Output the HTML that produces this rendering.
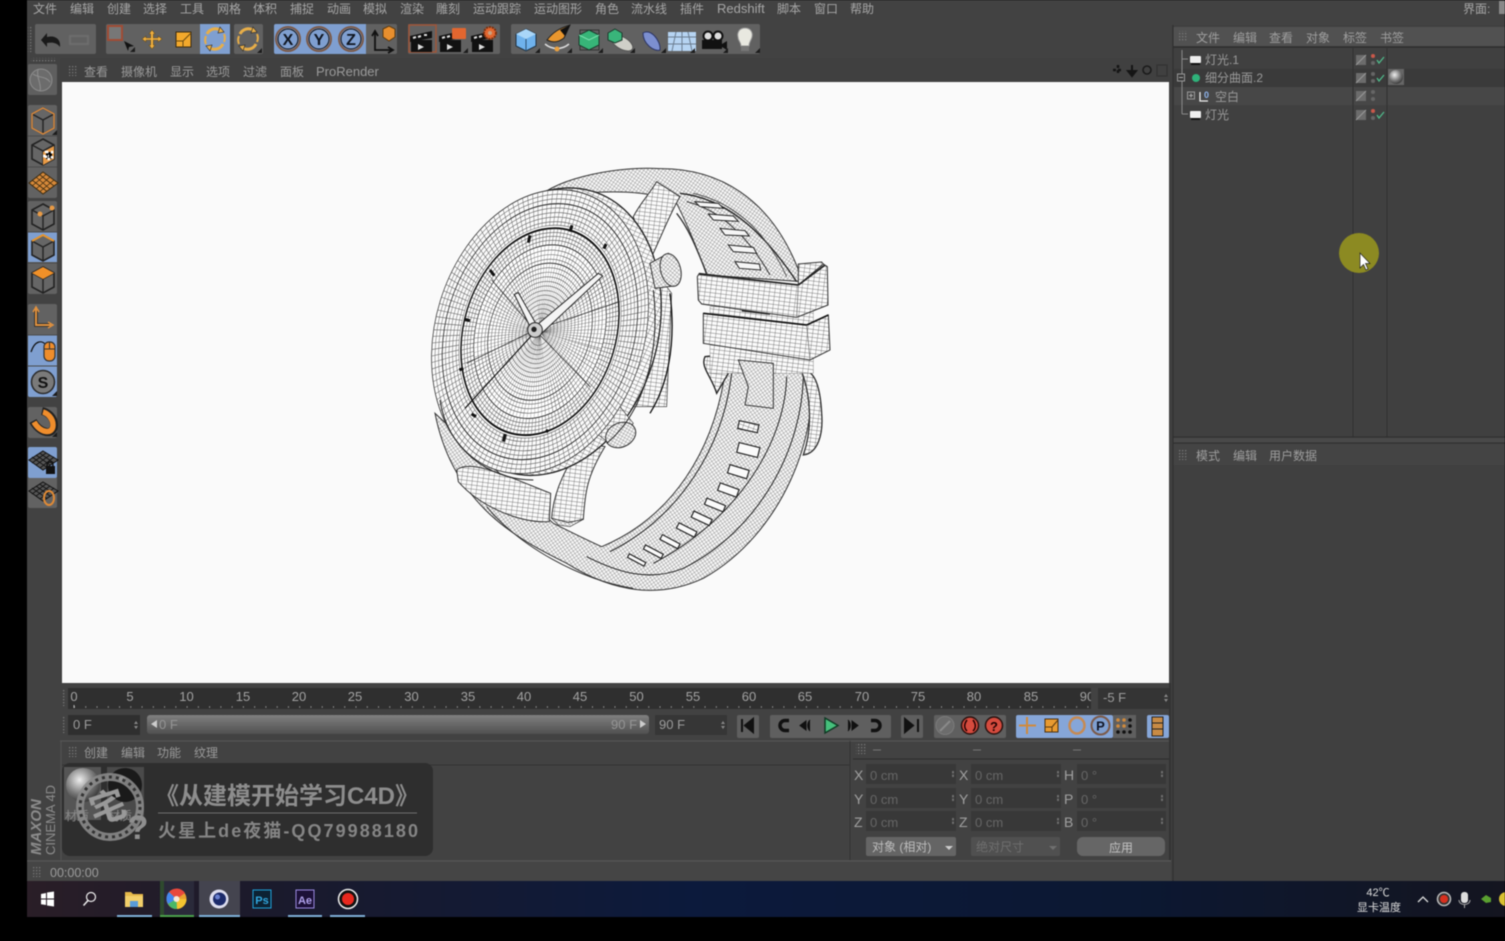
<!DOCTYPE html>
<html><head><meta charset="utf-8"><style>
html,body{margin:0;padding:0;background:#000;width:1505px;height:941px;overflow:hidden}
svg{display:block;filter:blur(.4px)}
text{font-family:"Liberation Sans","Noto Sans CJK SC",sans-serif}
.m{font-size:12px;fill:#a6a6a6}
.d{font-size:12px;fill:#9a9a9a}
.r{font-size:12px;fill:#a0a0a0}
.f{font-size:12px;fill:#8a8a8a}
.l{font-size:13px;fill:#9c9c9c}
.c{fill:none;stroke:#5a5a5a;stroke-width:1.900}
</style></head><body>
<svg width="1505" height="941" viewBox="0 0 1505 941" xmlns="http://www.w3.org/2000/svg">
<defs>
<pattern id="m" width="16" height="12" patternUnits="userSpaceOnUse" patternTransform="rotate(7)"><rect width="16" height="12" fill="#fbfbfb"/><path d="M0 0H16M0 0V12" stroke="#505050" stroke-width="2"/></pattern>
<pattern id="mf" width="9" height="9" patternUnits="userSpaceOnUse" patternTransform="rotate(-35)"><rect width="9" height="9" fill="#f8f8f8"/><path d="M0 0H9M0 0V9" stroke="#555" stroke-width="1.700"/></pattern>
<pattern id="mu" width="9" height="9" patternUnits="userSpaceOnUse" patternTransform="rotate(35)"><rect width="9" height="9" fill="#f8f8f8"/><path d="M0 0H9M0 0V9" stroke="#555" stroke-width="1.700"/></pattern>
<pattern id="grip" width="3" height="3" patternUnits="userSpaceOnUse"><rect width="1.300" height="1.300" fill="#777"/></pattern>
<linearGradient id="sl" x1="0" y1="0" x2="0" y2="1"><stop offset="0" stop-color="#808080"/><stop offset="1" stop-color="#505050"/></linearGradient>
<linearGradient id="tb" x1="0" y1="0" x2="1" y2="0"><stop offset="0" stop-color="#2a1e27"/><stop offset=".16" stop-color="#1b1a2c"/><stop offset=".45" stop-color="#0c1a3c"/><stop offset=".75" stop-color="#0c1832"/><stop offset="1" stop-color="#141520"/></linearGradient>
<radialGradient id="sph" cx=".4" cy=".35" r=".7"><stop offset="0" stop-color="#eee"/><stop offset=".6" stop-color="#777"/><stop offset="1" stop-color="#333"/></radialGradient>
<g id="cube"><path d="M0-13 11-7V7L0 13-11 7V-7Z" fill="#666" stroke="#222" stroke-width="1.600"/><path d="M-11-7 0-1 11-7M0-1V13" fill="none" stroke="#222" stroke-width="1.400"/></g>
<g id="clap"><rect x="-10" y="-1" width="21" height="12" fill="#111"/><path d="M-11-5 11-10V-3L-11 1Z" fill="#111"/><path d="M-8-3-5-4M-3-4 0-5M3-6 6-6" stroke="#ddd" stroke-width="2"/><path d="M-3 3 3 6-3 9Z" fill="#ddd"/></g>
<g id="tri"><path d="M0 0H-5L0-5Z" fill="#1c1c1c"/></g>
<g id="rot" fill="none"><path d="M-8-5A9.500 10 0 0 1 5-9M8 5A9.500 10 0 0 1-5 9" stroke="#e8ae48" stroke-width="3"/><path d="M-9 5A10 10 0 0 1-9-3M9-5A10 10 0 0 1 9 3" stroke="#e8ae48" stroke-width="2"/><path d="M5-12 9-7 3-6ZM-5 12-9 7-3 6Z" fill="#e8ae48" stroke="#222" stroke-width=".6"/></g>
</defs>

<rect width="1505" height="941" fill="#000"/>
<rect x="27" y="0" width="1478" height="881" fill="#424242"/>

<!-- menu -->
<text class="m" y="13"><tspan x="33">文件</tspan><tspan x="70">编辑</tspan><tspan x="107">创建</tspan><tspan x="143">选择</tspan><tspan x="180">工具</tspan><tspan x="217">网格</tspan><tspan x="253">体积</tspan><tspan x="290">捕捉</tspan><tspan x="327">动画</tspan><tspan x="363">模拟</tspan><tspan x="400">渲染</tspan><tspan x="436">雕刻</tspan><tspan x="473">运动跟踪</tspan><tspan x="534">运动图形</tspan><tspan x="595">角色</tspan><tspan x="631">流水线</tspan><tspan x="680">插件</tspan><tspan x="717" style="font-size:13px">Redshift</tspan><tspan x="777">脚本</tspan><tspan x="814">窗口</tspan><tspan x="850">帮助</tspan></text>

<!-- top toolbar -->
<rect x="28" y="26" width="4" height="26" fill="url(#grip)"/>
<rect x="35" y="24" width="61" height="30" rx="2" fill="#616161"/>
<path d="M41 40 47 33V37C55 35 61 39 60 47 57 43 53 42 47 43V47Z" fill="#1a1a1a"/>
<path d="M70 44V36H88V44Z" fill="none" stroke="#6d6d6d" stroke-width="2"/>
<rect x="106" y="24" width="124" height="30" rx="2" fill="#616161"/>
<rect x="200" y="24" width="30" height="30" fill="#7f9fd0"/>
<rect x="108" y="26" width="14" height="14" fill="#777" stroke="#a04c35" stroke-width="2"/>
<path d="M124 41 134 46 129 47 128 51Z" fill="#111"/>
<use href="#tri" x="135" y="52"/>
<path d="M152 30 155 34H153.300V38H158V36L162 39 158 42V40H153.300V45H155L152 49 149 45H150.700V40H146V42L142 39 146 36V38H150.700V34H149Z" fill="#f3b13e" stroke="#6a5020" stroke-width=".6"/>
<rect x="176" y="32" width="15" height="15" fill="#f3a92c" stroke="#3a2a10"/><path d="M176 41H183V47M183 41 191 33" stroke="#6a4a10" fill="none"/>
<use href="#rot" x="215" y="39"/>
<rect x="234" y="24" width="29" height="30" rx="2" fill="#616161"/>
<use href="#rot" x="248" y="39"/><use href="#tri" x="262" y="53"/>
<rect x="274" y="24" width="123" height="30" rx="2" fill="#616161"/>
<path d="M274 26a2 2 0 0 1 2-2H366V54H276a2 2 0 0 1-2-2Z" fill="#7f9fd0"/>
<g fill="#7f9fd0" stroke="#7c5a48" stroke-width="2"><circle cx="288" cy="39" r="12"/><circle cx="319" cy="39" r="12"/><circle cx="351" cy="39" r="12"/></g>
<g fill="none" stroke="#111" stroke-width="1"><circle cx="288" cy="39" r="10"/><circle cx="319" cy="39" r="10"/><circle cx="351" cy="39" r="10"/></g>
<text y="45" style="font-size:16px;font-weight:bold" fill="#0f1520" text-anchor="middle"><tspan x="288">X</tspan><tspan x="319">Y</tspan><tspan x="351">Z</tspan></text>
<path d="M375 32V50H392M372 36 375 31 378 36M388 47 393 50 388 53" fill="none" stroke="#111" stroke-width="1.800"/>
<path d="M383 29 389 26 395 29V37L389 41 383 37Z" fill="#e88f2e" stroke="#5c3a10"/>
<rect x="408" y="24" width="92" height="30" rx="2" fill="#616161"/>
<rect x="409" y="25" width="27" height="27" fill="none" stroke="#a05538" stroke-width="1.500"/>
<use href="#clap" x="421" y="41"/><use href="#clap" x="450" y="41"/><use href="#clap" x="482" y="41"/>
<rect x="452" y="28" width="14" height="11" rx="1" fill="#e2662f"/>
<circle cx="490" cy="33" r="6" fill="#e2662f" stroke="#7a3010" stroke-width="2" stroke-dasharray="2 1"/><circle cx="490" cy="33" r="2" fill="#c9a080"/>
<use href="#tri" x="468" y="53"/>
<rect x="511" y="24" width="249" height="30" rx="2" fill="#616161"/>
<path d="M526 29 536 34V46L526 51 516 46V34Z" fill="#6fb2ec" stroke="#1e3040"/><path d="M516 34 526 39 536 34 526 29Z" fill="#a9d6f8"/><path d="M526 39V51" stroke="#2d5070"/>
<path d="M547 40C553 32 560 28 570 25L564 38C559 42 553 43 547 40Z" fill="#e8962e" stroke="#222"/><path d="M560 30 570 25 565 36Z" fill="#111"/><path d="M545 44C552 50 562 50 569 44" fill="none" stroke="#ddd" stroke-width="1.500"/><circle cx="557" cy="49" r="2.500" fill="#e8a040"/>
<rect x="580" y="30" width="19" height="20" fill="none" stroke="#333"/><path d="M589 30 599 35V45L589 50 579 45V35Z" fill="#37b578" stroke="#1b3a2c"/><path d="M579 35 589 40 599 35" fill="none" stroke="#7ce0ae"/>
<ellipse cx="622" cy="43" rx="12" ry="6" transform="rotate(30 622 43)" fill="#cfcfc8" stroke="#555"/><path d="M615 29 622 33V40L615 43 608 40V33Z" fill="#39b47a" stroke="#1b3a2c"/>
<path d="M643 33C650 28 661 40 660 50 654 52 643 44 643 33Z" fill="#7c8fd0" stroke="#2b3464"/>
<path d="M668 32H696V51H668Z" fill="#b6d4f2"/><path d="M668 37H696M668 44H696M676 32 672 51M688 32 692 51M682 32V51" stroke="#6b7d90"/><use href="#tri" x="695" y="53"/>
<circle cx="708" cy="36" r="4.500" fill="#ddd" stroke="#111" stroke-width="2"/><circle cx="718" cy="36" r="4.500" fill="#ddd" stroke="#111" stroke-width="2"/><rect x="702" y="40" width="20" height="9" fill="#111"/><path d="M722 44 727 41V50L722 47Z" fill="#111"/>
<path d="M745 28C751 28 753 33 752 37 751 41 749 42 749 46H741C741 42 738 41 738 37 737 33 739 28 745 28Z" fill="#e8e8e0" stroke="#999"/><rect x="741" y="46" width="8" height="5" fill="#777"/>
<g><use href="#tri" x="540" y="53"/><use href="#tri" x="572" y="53"/><use href="#tri" x="603" y="53"/><use href="#tri" x="635" y="53"/><use href="#tri" x="666" y="53"/><use href="#tri" x="728" y="53"/><use href="#tri" x="760" y="53"/></g>

<!-- left toolbar -->
<rect x="31" y="58" width="24" height="4" fill="url(#grip)"/>
<rect x="28" y="64" width="29" height="31" rx="2" fill="#5f5f5f"/>
<circle cx="41" cy="80" r="11" fill="#6c6c6c" stroke="#8c8c8c"/><path d="M33 74C38 78 46 76 50 82M38 69C36 78 42 84 40 91" stroke="#8f8f8f" fill="none"/>
<rect x="28" y="105" width="29" height="93" rx="2" fill="#626262"/>
<rect x="28" y="201" width="29" height="93" rx="2" fill="#626262"/><rect x="28" y="232" width="29" height="30" fill="#7f9fd0"/>
<rect x="28" y="304" width="29" height="93" rx="2" fill="#626262"/><path d="M28 335H57V395a2 2 0 0 1-2 2H30a2 2 0 0 1-2-2Z" fill="#7f9fd0"/>
<rect x="28" y="407" width="29" height="31" rx="2" fill="#626262"/>
<rect x="28" y="447" width="29" height="61" rx="2" fill="#626262"/><rect x="28" y="447" width="29" height="31" rx="2" fill="#7f9fd0"/>
<g stroke="#4a4a4a"><path d="M28 136H57M28 167H57M28 232H57M28 263H57M28 335H57M28 366H57"/></g>
<use href="#cube" x="43" y="121"/><path d="M43 108 54 114V128L43 134 32 128V114Z" fill="none" stroke="#d88a40" stroke-width="1.500"/><use href="#tri" x="57" y="135"/>
<use href="#cube" x="43" y="152"/><path d="M43 152 54 146V159L43 165Z" fill="#e89a45"/><path d="M46 152H52V159H46ZM43 156H49" stroke="#fff" stroke-width="2.500" stroke-dasharray="2.500 2.500"/>
<path d="M43 172 58 183 43 194 29 183Z" fill="#d6893a" stroke="#3a2a10"/><path d="M36 177 50 189M39.500 174.500 54 186M32 180 47 191.500M36 189 50 177M32 186 46 174.500M40 191.500 54 180" stroke="#3a2a10" stroke-width=".8"/>
<use href="#cube" x="43" y="217"/><circle cx="40" cy="214" r="2.500" fill="#e89a45"/><circle cx="52" cy="208" r="2.500" fill="#e89a45"/>
<use href="#cube" x="43" y="248"/><path d="M32 241 43 235 54 241" fill="none" stroke="#e8962e" stroke-width="2"/>
<use href="#cube" x="43" y="280"/><path d="M32 273 43 267 54 273 43 279Z" fill="#f09028"/>
<path d="M36 308V325H51" fill="none" stroke="#222" stroke-width="3.500"/><path d="M36 308V325H51" fill="none" stroke="#e0913f" stroke-width="2"/><path d="M33 312 36 307 39 312M48 322 53 325 48 328" fill="none" stroke="#e0913f" stroke-width="1.500"/>
<path d="M31 352C35 340 42 340 46 345" fill="none" stroke="#111" stroke-width="1.200"/><rect x="44" y="342" width="11" height="19" rx="5" fill="#ef8d2c" stroke="#333" stroke-width="1.200"/><path d="M44 349H55M49.500 342V349" stroke="#333"/>
<circle cx="43" cy="382" r="11.500" fill="#7a7a7a" stroke="#2a2a2a" stroke-width="1.500"/><text x="43" y="388" text-anchor="middle" style="font-size:16px;font-weight:bold" fill="#111">S</text><use href="#tri" x="57" y="396"/>
<path d="M33 421C40 434 54 436 54 425 54 417 47 412 42 411" fill="none" stroke="#222" stroke-width="8"/><path d="M34 422C40 433 53 435 53 425 53 418 47 413 43 412" fill="none" stroke="#ef8d2c" stroke-width="5.500"/><use href="#tri" x="57" y="437"/>
<path d="M43 451 58 460 43 470 29 460Z" fill="#555" stroke="#111"/><path d="M36 455 50 465M39.500 453 54 463M32 457 47 467.500M36 465 50 455M32 463 46 453M40 468 54 457" stroke="#111" stroke-width=".8"/>
<rect x="46" y="466" width="9" height="8" fill="#111"/><circle cx="50" cy="465" r="3" fill="none" stroke="#111" stroke-width="1.500"/>
<path d="M43 482 58 491 43 501 29 491Z" fill="#555" stroke="#111"/><path d="M36 486 50 496M39.500 484 54 494M32 488 47 498.500M36 496 50 486M32 494 46 484M40 499 54 488" stroke="#111" stroke-width=".8"/>
<ellipse cx="49" cy="498" rx="5" ry="7" fill="none" stroke="#e08a35" stroke-width="2"/>

<!-- viewport header -->
<rect x="60" y="58" width="1111" height="625" fill="#404040"/>
<rect x="68" y="66" width="9" height="10" fill="url(#grip)"/>
<text class="d" y="76"><tspan x="84">查看</tspan><tspan x="121">摄像机</tspan><tspan x="170">显示</tspan><tspan x="206">选项</tspan><tspan x="243">过滤</tspan><tspan x="280">面板</tspan><tspan x="316" style="font-size:13px">ProRender</tspan></text>
<path d="M1118 65V75M1113 70H1123" stroke="#151515" stroke-width="2.500" stroke-dasharray="3 2"/>
<path d="M1132 65V72M1128 71H1136L1132 76Z" stroke="#151515" stroke-width="2" fill="#151515"/>
<circle cx="1147" cy="70" r="4" fill="none" stroke="#1b1b1b" stroke-width="1.600"/>
<path d="M1157 65H1167V76H1157Z" fill="none" stroke="#333" stroke-width="1.300"/>
<rect x="62" y="82" width="1107" height="601" fill="#fafafa"/>

<!-- WATCH -->
<g transform="translate(420 160) scale(.33333)">
<!-- upper strap -->
<path d="M350 115C420 50 600 18 720 26 880 25 1060 100 1148 365L860 345C830 260 800 190 770 130 700 90 560 85 350 115Z" fill="url(#mu)" stroke="#333" stroke-width="3"/>
<path d="M780 100C910 115 1020 200 1130 365" fill="none" stroke="#222" stroke-width="4"/>
<path d="M770 160C810 210 835 280 860 340" fill="none" stroke="#333" stroke-width="4"/>
<path d="M800 125C900 150 985 230 1050 345" fill="none" stroke="#333" stroke-width="3"/>
<path d="M820 100C950 130 1040 220 1100 350" fill="none" stroke="#444" stroke-width="2.500"/>
<g fill="#f6f6f6" stroke="#222" stroke-width="3"><path d="M825 125 895 130 910 145 840 140Z"/><path d="M865 162 940 168 955 184 880 180Z"/><path d="M900 205 975 212 988 228 915 225Z"/><path d="M925 255 1000 262 1010 280 940 275Z"/><path d="M945 305 1018 312 1022 330 958 325Z"/></g>
<!-- lower strap -->
<path d="M860 590 1170 620C1200 820 1090 1120 850 1255 700 1325 560 1285 440 1210 300 1140 100 1040 45 760L400 1090C440 1110 500 1140 545 1160 760 1070 880 870 915 640Z" fill="url(#mf)" stroke="#333" stroke-width="3"/>
<path d="M935 640C910 860 780 1070 570 1175M1150 640C1150 860 1020 1110 790 1225 680 1270 580 1230 500 1190M1100 650C1095 850 950 1080 700 1210" fill="none" stroke="#222" stroke-width="3"/>
<path d="M200 1040C300 1160 480 1260 640 1285" fill="none" stroke="#333" stroke-width="3"/>
<g fill="#fafafa" stroke="#222" stroke-width="3.500">
<rect x="-30" y="-12" width="60" height="24" transform="translate(985 800) rotate(12)" fill="url(#m)"/>
<rect x="-32" y="-15" width="64" height="30" transform="translate(985 870) rotate(14)"/>
<rect x="-30" y="-13" width="60" height="26" transform="translate(955 935) rotate(17)"/>
<rect x="-30" y="-12" width="60" height="24" transform="translate(925 990) rotate(20)"/>
<rect x="-30" y="-10" width="60" height="20" transform="translate(885 1035) rotate(22)"/>
<rect x="-30" y="-10" width="60" height="20" transform="translate(845 1075) rotate(25)"/>
<rect x="-30" y="-9" width="60" height="18" transform="translate(800 1110) rotate(27)"/>
<rect x="-30" y="-8" width="60" height="16" transform="translate(750 1145) rotate(28)"/>
<rect x="-30" y="-7" width="60" height="14" transform="translate(700 1175) rotate(28)"/>
<rect x="-28" y="-6" width="56" height="12" transform="translate(650 1200) rotate(28)"/>
</g>
<!-- buckle side tabs -->
<path d="M855 590C840 620 875 650 890 700L925 640 900 585Z" fill="url(#m)" stroke="#222" stroke-width="4"/>
<path d="M1145 635C1175 625 1200 660 1205 760 1210 820 1195 880 1150 885 1180 800 1170 700 1145 635Z" fill="url(#m)" stroke="#333" stroke-width="4"/>
<path d="M870 440H1180V640H870Z" fill="url(#m)" stroke="#555" stroke-width="1"/>
<path d="M955 600 1060 610 1060 745 975 735 985 680Z" fill="url(#mf)" stroke="#333" stroke-width="3"/>
<path d="M965 452 1050 462" stroke="#222" stroke-width="5"/>
<!-- loops -->
<path d="M1135 312 1205 306 1218 322 1135 375Z" fill="url(#m)" stroke="#333" stroke-width="3"/>
<path d="M832 350 838 340 1135 375 1210 312 1222 320 1224 435 1130 472 845 432 835 420Z" fill="url(#m)" stroke="#333" stroke-width="3"/>
<path d="M838 342 1135 375 1214 316" fill="none" stroke="#222" stroke-width="5"/>
<path d="M1135 375 1130 472" stroke="#666" stroke-width="2"/>
<path d="M850 460 1160 495 1225 465 1230 570 1170 600 850 550Z" fill="url(#m)" stroke="#333" stroke-width="3"/>
<path d="M850 460 1160 495 1225 465" fill="none" stroke="#111" stroke-width="5"/>
<path d="M1160 495 1170 600" stroke="#666" stroke-width="2"/>
<!-- lugs -->
<path d="M640 170C660 215 680 250 695 320L755 400 740 740H600L680 300Z" fill="url(#m)" stroke="#333" stroke-width="2"/>
<path d="M710 65 780 110C745 170 720 240 690 300L660 240 640 170C660 130 690 100 710 65Z" fill="url(#m)" stroke="#333" stroke-width="3"/>
<path d="M500 850 555 860C500 950 495 1000 490 1078L445 1088 395 1075C400 1000 440 900 500 850Z" fill="url(#m)" stroke="#333" stroke-width="3"/>
<path d="M395 1075 445 1088 490 1078 450 1100 415 1095Z" fill="url(#mf)" stroke="#333" stroke-width="2"/>
<!-- case side -->
<ellipse cx="390" cy="515" rx="322" ry="440" transform="rotate(17 390 515)" fill="url(#m)" stroke="#222" stroke-width="4"/>
<path d="M110 930C150 895 265 950 392 1000L388 1085C300 1090 180 1040 115 965Z" fill="url(#m)" stroke="#333" stroke-width="3"/>
<!-- crowns -->
<path d="M690 310 745 280 780 330 760 378 705 385Z" fill="url(#mf)" stroke="#333" stroke-width="3"/>
<ellipse cx="752" cy="330" rx="30" ry="50" transform="rotate(-15 752 330)" fill="url(#mf)" stroke="#333" stroke-width="3"/>
<path d="M530 820 600 740 640 790 580 860Z" fill="url(#m)" stroke="#333" stroke-width="2"/>
<ellipse cx="602" cy="825" rx="47" ry="36" transform="rotate(-25 602 825)" fill="url(#mf)" stroke="#333" stroke-width="3"/>
<!-- bezel -->
<g transform="translate(360 515) rotate(17) scale(.72 1)">
<circle r="435" fill="#fbfbfb" stroke="#333" stroke-width="3"/>
<g class="c"><circle r="421"/><circle r="407"/><circle r="393"/><circle r="379"/><circle r="365"/><circle r="351"/><circle r="337"/><circle r="326"/></g>
<circle r="380" fill="none" stroke="#5a5a5a" stroke-width="110" stroke-dasharray="1.700 16"/>
<circle r="392" fill="none" stroke="#333" stroke-width="3"/>
<circle r="317" fill="#fcfcfc" stroke="#111" stroke-width="6"/>
<!-- dial -->
<g class="c"><circle r="304"/><circle r="292"/><circle r="280"/></g>
<circle r="290" fill="none" stroke="#5a5a5a" stroke-width="50" stroke-dasharray="1.700 12"/>
<circle r="266" fill="#fff" stroke="#333" stroke-width="3"/>
<circle r="210" fill="none" stroke="#333" stroke-width="3"/>
<g class="c"><circle r="250"/><circle r="236"/><circle r="222"/><circle r="196"/><circle r="182"/><circle r="168"/><circle r="154"/><circle r="140"/><circle r="126"/><circle r="112"/><circle r="98"/><circle r="84"/><circle r="70"/><circle r="56"/><circle r="42"/></g>
<circle r="132" fill="none" stroke="#5a5a5a" stroke-width="264" stroke-dasharray="1 6.500"/>
</g>
<!-- hour marks -->
<g stroke="#111" stroke-width="9" fill="none"><path d="M456 196 450 215M330 226 325 248M558 252 552 266M210 330 223 347M135 478 150 482M118 630 130 625M155 762 168 770M256 822 250 845M378 810 385 816"/></g>
<!-- sector edges -->
<path d="M345 510 600 425M345 510 510 680M345 510 140 610M345 510 215 360" stroke="#333" stroke-width="2.500"/>
<!-- hands -->
<path d="M283 403 295 398 350 495 335 510Z" fill="#f4f4f4" stroke="#222" stroke-width="3"/>
<path d="M535 340 548 348 365 520 345 500Z" fill="#f4f4f4" stroke="#222" stroke-width="3"/>
<path d="M350 510 135 745" stroke="#111" stroke-width="3.500"/>
<circle cx="345" cy="510" r="22" fill="#ccc" stroke="#222" stroke-width="3"/><circle cx="342" cy="508" r="8" fill="#222"/>
<!-- case shadow lines -->
<path d="M60 720C80 860 200 960 340 960M700 390C720 560 680 750 560 850" fill="none" stroke="#222" stroke-width="3"/>
<path d="M750 400C770 560 740 680 690 760" fill="none" stroke="#111" stroke-width="4"/>
</g>

<!-- timeline -->
<rect x="60" y="683" width="1111" height="60" fill="#424242"/>
<rect x="68" y="688" width="1024" height="21" fill="#2f2f2f"/>
<rect x="62" y="690" width="4" height="16" fill="url(#grip)"/>
<text style="font-size:13px" fill="#a2a2a2" y="701" text-anchor="middle"><tspan x="74">0</tspan><tspan x="130">5</tspan><tspan x="186.500">10</tspan><tspan x="243">15</tspan><tspan x="299">20</tspan><tspan x="355">25</tspan><tspan x="411.500">30</tspan><tspan x="468">35</tspan><tspan x="524">40</tspan><tspan x="580">45</tspan><tspan x="636.500">50</tspan><tspan x="693">55</tspan><tspan x="749">60</tspan><tspan x="805">65</tspan><tspan x="862">70</tspan><tspan x="918">75</tspan><tspan x="974">80</tspan><tspan x="1031">85</tspan><tspan x="1087">90</tspan></text>
<rect x="1091" y="688" width="7" height="21" fill="#424242"/>
<path d="M74 707H1092" stroke="#999" stroke-width="1.500" stroke-dasharray="1 10.260"/>
<path d="M74 705V708" stroke="#bbb"/>
<rect x="1098" y="688" width="71" height="21" fill="#343434"/>
<text class="l" x="1103" y="702">-5 F</text>
<path d="M1166 694 1164 697H1168ZM1166 702 1164 699H1168Z" fill="#888"/>
<rect x="62" y="716" width="4" height="17" fill="url(#grip)"/>
<rect x="68" y="715" width="72" height="20" fill="#2f2f2f"/>
<text class="l" x="73" y="729">0 F</text>
<path d="M136 721 134 724H138ZM136 729 134 726H138Z" fill="#888"/>
<rect x="147" y="715" width="502" height="19" rx="3" fill="url(#sl)"/>
<path d="M157 720 151 724 157 728Z" fill="#ccc"/>
<text x="159" y="729" style="font-size:13px" fill="#959595">0 F</text>
<text x="611" y="729" style="font-size:13px" fill="#959595">90 F</text>
<path d="M640 720 646 724 640 728Z" fill="#ccc"/>
<rect x="655" y="715" width="72" height="20" fill="#363636"/>
<text class="l" x="659" y="729">90 F</text>
<path d="M723 721 721 724H725ZM723 729 721 726H725Z" fill="#888"/>
<rect x="737" y="715" width="22" height="23" rx="2" fill="#5f5f5f"/>
<path d="M742 719V732M753 719 745 725.500 753 732Z" stroke="#111" stroke-width="2" fill="#111"/>
<rect x="770" y="715" width="121" height="23" rx="2" fill="#5f5f5f"/>
<path d="M789 720.500H785A5 5 0 0 0 785 730.500H789" fill="none" stroke="#111" stroke-width="3.500"/>
<path d="M806 721 800 725.500 806 730ZM810 720C807 723 807 728 810 731" fill="#111" stroke="#111"/>
<path d="M825 718 838 725.500 825 733Z" fill="#46c07c" stroke="#0f3a24" stroke-width="1.500"/>
<path d="M852 721 858 725.500 852 730ZM848 720C851 723 851 728 848 731" fill="#111" stroke="#111"/>
<path d="M871 720.500H875A5 5 0 0 1 875 730.500H871" fill="none" stroke="#111" stroke-width="3.500"/>
<rect x="901" y="715" width="22" height="23" rx="2" fill="#5f5f5f"/>
<path d="M905 719 913 725.500 905 732ZM918 719V732" stroke="#111" stroke-width="2" fill="#111"/>
<rect x="934" y="715" width="72" height="23" rx="2" fill="#5f5f5f"/>
<circle cx="945" cy="725.500" r="9" fill="#6c6c6c" stroke="#7b7b7b"/><path d="M940 731 950 721" stroke="#8a8a8a" stroke-width="2"/>
<circle cx="970" cy="725.500" r="8.500" fill="#d64b3e" stroke="#2a1210" stroke-width="1.500"/><path d="M967 720C964 724 964 728 967 731M973 720C976 724 976 728 973 731" fill="none" stroke="#200" stroke-width="1.500"/>
<circle cx="994" cy="725.500" r="8.500" fill="#d64b3e" stroke="#2a1210" stroke-width="1.500"/><text x="994" y="731" text-anchor="middle" style="font-size:13px;font-weight:bold" fill="#200">?</text>
<rect x="1016" y="715" width="97" height="23" rx="2" fill="#86a6d8"/>
<rect x="1113" y="715" width="23" height="23" fill="#5f5f5f"/>
<path d="M1027 717V734M1019 725.500H1036" stroke="#d08a3c" stroke-width="2"/>
<rect x="1045" y="719" width="13" height="13" fill="#e89a30" stroke="#4a3010"/><path d="M1045 727H1052V732M1052 727 1058 720" stroke="#5a3a10" fill="none"/>
<ellipse cx="1077" cy="725.500" rx="7.500" ry="8" fill="none" stroke="#c68a52" stroke-width="2.500"/>
<circle cx="1100.500" cy="725.500" r="9" fill="#7f9fd0" stroke="#7c5a48" stroke-width="2"/><text x="1100.500" y="730.500" text-anchor="middle" style="font-size:13px;font-weight:bold" fill="#101525">P</text>
<g fill="#d08a3c"><circle cx="1118" cy="720" r="1.800"/><circle cx="1124" cy="720" r="1.800"/><circle cx="1118" cy="726" r="1.800"/><circle cx="1124" cy="726" r="1.800"/></g>
<g fill="#111"><circle cx="1130" cy="720" r="1.800"/><circle cx="1130" cy="726" r="1.800"/><circle cx="1118" cy="732" r="1.800"/><circle cx="1124" cy="732" r="1.800"/><circle cx="1130" cy="732" r="1.800"/></g>
<rect x="1147" y="715" width="22" height="23" rx="2" fill="#86a6d8"/>
<rect x="1152" y="717" width="11" height="19" fill="#c88b45" stroke="#222"/><path d="M1152 723H1163M1152 729H1163" stroke="#222"/>

<!-- material panel -->
<path d="M60 741H1171" stroke="#575757"/>
<rect x="68" y="747" width="9" height="10" fill="url(#grip)"/>
<text class="d" y="757"><tspan x="84">创建</tspan><tspan x="121">编辑</tspan><tspan x="157">功能</tspan><tspan x="194">纹理</tspan></text>
<path d="M62 765H850" stroke="#333"/>
<path d="M850 741V863" stroke="#333"/>
<!-- maxon -->
<text transform="translate(41 855) rotate(-90)" style="font-size:15px;font-weight:bold;font-style:italic" fill="#8c8c8c">MAXON</text>
<text transform="translate(55 855) rotate(-90)" style="font-size:13px" fill="#8c8c8c">CINEMA 4D</text>
<path d="M61 741V860" stroke="#555"/>
<!-- overlay -->
<rect x="62" y="763" width="371" height="93" rx="8" fill="#2e2e2e"/>
<rect x="64" y="767" width="37" height="53" fill="#555"/><rect x="107" y="767" width="37" height="53" fill="#4a4a4a"/>
<circle cx="83" cy="785" r="17" fill="url(#sph)"/><circle cx="125" cy="785" r="17" fill="#1a1a1a"/><circle cx="122" cy="779" r="3" fill="#ccc"/>
<text class="f" x="65" y="820">材质</text><text class="f" x="108" y="820">材质.1</text>
<circle cx="110" cy="807" r="30" fill="none" stroke="#8a8a8a" stroke-width="8" opacity=".9"/>
<circle cx="110" cy="807" r="30" fill="none" stroke="#333" stroke-width="3" stroke-dasharray="3 4"/>
<text x="108" y="820" text-anchor="middle" transform="rotate(-18 108 808)" style="font-size:36px;font-weight:bold" fill="#999">宅</text>
<text x="138" y="839" text-anchor="middle" style="font-size:34px;font-weight:bold" fill="#8f8f8f">?</text>
<text x="155" y="804" style="font-size:24px;font-weight:bold" fill="#8d8d8d" textLength="264" lengthAdjust="spacing">《从建模开始学习C4D》</text>
<path d="M158 813H417" stroke="#707070"/>
<text x="158" y="837" style="font-size:18px;font-weight:bold" fill="#858585" textLength="260" lengthAdjust="spacing">火星上de夜猫-QQ79988180</text>

<!-- coordinates -->
<rect x="856" y="744" width="10" height="10" fill="url(#grip)"/>
<path d="M873 750H881M973 750H981M1073 750H1081" stroke="#777"/>
<path d="M853 759H1169" stroke="#2c2c2c"/>
<g fill="#383838"><rect x="866" y="764" width="90" height="20"/><rect x="971" y="764" width="90" height="20"/><rect x="1077" y="764" width="89" height="20"/><rect x="866" y="788" width="90" height="20"/><rect x="971" y="788" width="90" height="20"/><rect x="1077" y="788" width="89" height="20"/><rect x="866" y="811" width="90" height="20"/><rect x="971" y="811" width="90" height="20"/><rect x="1077" y="811" width="89" height="20"/></g>
<text style="font-size:14px" fill="#a0a0a0"><tspan x="854" y="780">X</tspan><tspan x="959" y="780">X</tspan><tspan x="1064" y="780">H</tspan><tspan x="854" y="804">Y</tspan><tspan x="959" y="804">Y</tspan><tspan x="1064" y="804">P</tspan><tspan x="854" y="827">Z</tspan><tspan x="959" y="827">Z</tspan><tspan x="1064" y="827">B</tspan></text>
<text style="font-size:13px" fill="#666"><tspan x="870" y="780">0 cm</tspan><tspan x="975" y="780">0 cm</tspan><tspan x="1081" y="780">0 °</tspan><tspan x="870" y="804">0 cm</tspan><tspan x="975" y="804">0 cm</tspan><tspan x="1081" y="804">0 °</tspan><tspan x="870" y="827">0 cm</tspan><tspan x="975" y="827">0 cm</tspan><tspan x="1081" y="827">0 °</tspan></text>
<path d="M953 771V777M1058 771V777M1162 771V777M953 795V801M1058 795V801M1162 795V801M953 818V824M1058 818V824M1162 818V824" stroke="#6c6c6c" stroke-width="2" stroke-dasharray="2.500 1"/>
<rect x="866" y="837" width="90" height="19" rx="2" fill="#656565"/>
<text x="872" y="851" style="font-size:12px" fill="#bdbdbd">对象 (相对)</text><path d="M945 846H953L949 850Z" fill="#ccc"/>
<rect x="971" y="837" width="89" height="19" rx="2" fill="#505050"/>
<text x="976" y="851" style="font-size:12px" fill="#6f6f6f">绝对尺寸</text><path d="M1049 846H1057L1053 850Z" fill="#6f6f6f"/>
<rect x="1077" y="837" width="88" height="19" rx="6" fill="#666"/>
<text x="1121" y="852" text-anchor="middle" style="font-size:12px" fill="#c2c2c2">应用</text>
<path d="M1170 683V881" stroke="#333" stroke-width="2"/>

<!-- status -->
<rect x="27" y="860" width="1146" height="21" fill="#454545"/>
<path d="M27 861H1172" stroke="#5a5a5a"/>
<rect x="32" y="867" width="10" height="10" fill="url(#grip)"/>
<text x="50" y="877" style="font-size:12.500px" fill="#9c9c9c">00:00:00</text>

<!-- object manager -->
<rect x="1171" y="0" width="334" height="881" fill="#404040"/>
<rect x="1171" y="0" width="334" height="25" fill="#424242"/>
<text class="m" x="1463" y="13">界面:</text><rect x="1499" y="1" width="6" height="13" fill="#888"/>
<rect x="1173" y="27" width="332" height="20" fill="#515151"/>
<path d="M1173 47H1505" stroke="#2d2d2d" stroke-width="1.500"/>
<rect x="1178" y="31" width="10" height="11" fill="url(#grip)"/>
<text style="font-size:12px" fill="#9e9e9e" y="42"><tspan x="1196">文件</tspan><tspan x="1233">编辑</tspan><tspan x="1269">查看</tspan><tspan x="1306">对象</tspan><tspan x="1343">标签</tspan><tspan x="1380">书签</tspan></text>
<rect x="1174" y="69" width="331" height="18" fill="#3a3a3a"/>
<rect x="1174" y="87" width="331" height="18" fill="#474747"/>
<path d="M1353 48V437M1387 48V437" stroke="#303030"/>
<path d="M1182 50V111M1182 59H1188M1182 114H1188M1182 111V114" fill="none" stroke="#8a8a8a"/>
<rect x="1177.500" y="74" width="7" height="7" fill="#3a3a3a" stroke="#999"/><path d="M1179 77.500H1183" stroke="#aaa"/>
<rect x="1187.500" y="92" width="7" height="7" fill="#474747" stroke="#999"/><path d="M1189 95.500H1193M1191 93.500V97.500" stroke="#aaa"/>
<rect x="1190" y="56" width="11" height="7" rx="1" fill="#eee"/><path d="M1191 63H1200V65H1191Z" fill="#111"/>
<rect x="1190" y="111" width="11" height="7" rx="1" fill="#eee"/><path d="M1191 118H1200V120H1191Z" fill="#111"/>
<circle cx="1196" cy="78" r="4" fill="#2fb27a"/>
<path d="M1200 92V101H1208" fill="none" stroke="#eee" stroke-width="1.300"/><text x="1204" y="98" style="font-size:9px;font-weight:bold" fill="#8eb3ea">0</text>
<text style="font-size:12px" fill="#9a9a9a"><tspan x="1205" y="64">灯光.1</tspan><tspan x="1205" y="82">细分曲面.2</tspan><tspan x="1215" y="101">空白</tspan><tspan x="1205" y="119">灯光</tspan></text>
<g fill="#6c6c6c"><rect x="1356" y="55" width="10" height="10"/><rect x="1356" y="73" width="10" height="10"/><rect x="1356" y="91" width="10" height="10"/><rect x="1356" y="110" width="10" height="10"/></g>
<path d="M1356 65 1366 55M1356 83 1366 73M1356 101 1366 91M1356 120 1366 110" stroke="#999"/>
<g fill="#666"><circle cx="1373" cy="63" r="2"/><circle cx="1373" cy="74" r="2"/><circle cx="1373" cy="81" r="2"/><circle cx="1373" cy="92" r="2"/><circle cx="1373" cy="99" r="2"/><circle cx="1373" cy="118" r="2"/></g>
<circle cx="1373" cy="56" r="2" fill="#c9584a"/><circle cx="1373" cy="111" r="2" fill="#c9584a"/>
<path d="M1377 60 1379 63 1384 57M1377 78 1379 81 1384 75M1377 115 1379 118 1384 112" fill="none" stroke="#4fb98a" stroke-width="1.300"/>
<rect x="1388" y="69" width="16" height="16" fill="#666"/><circle cx="1396" cy="77" r="7" fill="url(#sph)"/>
<!-- divider -->
<path d="M1173 437H1505" stroke="#2e2e2e"/><rect x="1173" y="438" width="332" height="5" fill="#494949"/><path d="M1173 443H1505" stroke="#2e2e2e"/>
<rect x="1173" y="444" width="332" height="21" fill="#444"/>
<rect x="1178" y="449" width="10" height="11" fill="url(#grip)"/>
<text style="font-size:12px" fill="#9e9e9e" y="460"><tspan x="1196">模式</tspan><tspan x="1233">编辑</tspan><tspan x="1269">用户数据</tspan></text>
<path d="M1173 25V881" stroke="#2e2e2e" stroke-width="1"/>

<!-- cursor -->
<circle cx="1359" cy="253" r="20" fill="#8c8a22"/>
<path d="M1360 253V268L1363.500 264.500 1366 270 1368 269 1365.500 263.500H1370Z" fill="#fff" stroke="#222" stroke-width=".7"/>

<!-- taskbar -->
<rect x="27" y="881" width="1478" height="36" fill="url(#tb)"/>
<rect x="160" y="881" width="34" height="36" fill="#2a2a3a"/><rect x="160" y="881" width="4" height="36" fill="#2e4a2e"/>
<rect x="199" y="881" width="41" height="36" fill="#44444f"/>
<path d="M117 916H152M199 916H240M288 916H322M330 916H365" stroke="#7fb0d8" stroke-width="2"/><path d="M160 916H194" stroke="#4ba04b" stroke-width="2"/>
<path d="M41 894 46 893V898.500H41ZM47 892.500 54 891.500V898.500H47ZM41 899.500H46V905L41 904.200ZM47 899.500H54V906.500L47 905.500Z" fill="#fff"/>
<circle cx="91" cy="897" r="4.500" fill="none" stroke="#eee" stroke-width="1.200"/><path d="M88 900.500 83.500 905.500" stroke="#eee" stroke-width="1.500"/>
<path d="M125 892H131L133 894H143V907H125Z" fill="#e6b94a"/><rect x="125" y="896" width="18" height="11" fill="#f2cf6a"/><rect x="130" y="901" width="8" height="6" fill="#5a9bd8"/>
<circle cx="176.500" cy="899" r="10" fill="#e8a030"/><path d="M176.500 899 169 892A10 10 0 0 1 185 893Z" fill="#e8483c"/><path d="M176.500 899 186.500 899A10 10 0 0 1 177 909Z" fill="#f4c430"/><path d="M176.500 899 168 904A10 10 0 0 1 169 892Z" fill="#4488ee"/><path d="M176.500 899 168 904A10 10 0 0 0 177 909Z" fill="#48b868"/><circle cx="176.500" cy="899" r="3" fill="#f6e8d8"/>
<circle cx="219" cy="899" r="9.500" fill="#dde"/><circle cx="219.500" cy="899" r="6.500" fill="#1c2a6a"/><circle cx="217.500" cy="897" r="2.500" fill="#6a80d0"/>
<rect x="253" y="890" width="18" height="18" fill="#0c2233" stroke="#1fa0d8"/><text x="262" y="904" text-anchor="middle" style="font-size:11px;font-weight:bold" fill="#32a8e0">Ps</text>
<rect x="296" y="890" width="18" height="18" fill="#1c1038" stroke="#9a8ae0"/><text x="305" y="904" text-anchor="middle" style="font-size:11px;font-weight:bold" fill="#b0a2ec">Ae</text>
<circle cx="348" cy="899" r="9.500" fill="#111" stroke="#eee" stroke-width="1.500"/><circle cx="348" cy="899" r="6" fill="#e8281e"/>
<text x="1378" y="896" text-anchor="middle" style="font-size:11px" fill="#ddd">42℃</text>
<text x="1379" y="911" text-anchor="middle" style="font-size:11px" fill="#ddd">显卡温度</text>
<path d="M1418 902 1423 897 1428 902" fill="none" stroke="#ddd" stroke-width="1.300"/>
<circle cx="1444" cy="899" r="6.500" fill="#333" stroke="#bbb" stroke-width="1.500"/><circle cx="1444" cy="899" r="4" fill="#d8301e"/>
<rect x="1461" y="892" width="7" height="11" rx="3" fill="#ddd"/><path d="M1459 900C1459 906 1470 906 1470 900M1464.500 905V908" fill="none" stroke="#aaa"/>
<path d="M1481 899 1486 895 1491 898V902L1486 903Z" fill="#5aa030"/>
<circle cx="1506" cy="899" r="7" fill="#d8c030"/>
</svg>
</body></html>
